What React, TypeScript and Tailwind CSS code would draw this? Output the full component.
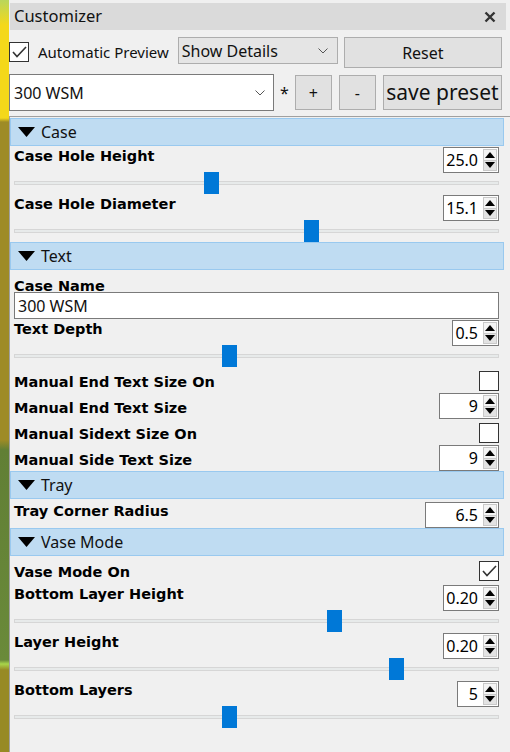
import React from 'react';

const sans = 'font-["Noto_Sans","Open_Sans",sans-serif]';
const bold = 'font-["DejaVu_Sans","Verdana",sans-serif] font-bold';

function Chevron() {
  return (
    <svg width="10" height="6" viewBox="0 0 10 6" className="shrink-0">
      <polyline points="0.5,0.5 5,5 9.5,0.5" fill="none" stroke="#555" strokeWidth="1" />
    </svg>
  );
}

function CheckMark() {
  return (
    <svg width="15" height="12" viewBox="0 0 15 12">
      <polyline points="1,6 5,10.5 14,1" fill="none" stroke="#333" strokeWidth="1.6" />
    </svg>
  );
}

function Check({ checked }: { checked?: boolean }) {
  return (
    <div className="w-[20px] h-[20px] bg-white border border-[#333] flex items-center justify-center">
      {checked && <CheckMark />}
    </div>
  );
}

function Spin({ value, width }: { value: string; width: number }) {
  return (
    <div className="h-[26px] bg-white border border-[#7a7a7a] flex items-stretch" style={{ width }}>
      <div className={`flex-1 flex items-center justify-end pr-[5px] text-[16px] text-black ${sans}`}>{value}</div>
      <div className="w-[15px] flex flex-col py-px pr-px">
        <div className="flex-1 flex items-center justify-center bg-[#f4f4f4] border border-[#c9c9c9]">
          <svg width="10" height="6" viewBox="0 0 10 6"><polygon points="0,6 5,0 10,6" fill="#000" /></svg>
        </div>
        <div className="flex-1 flex items-center justify-center bg-[#e3e3e3] border border-[#c9c9c9] border-t-0">
          <svg width="10" height="6" viewBox="0 0 10 6"><polygon points="0,0 5,6 10,0" fill="#000" /></svg>
        </div>
      </div>
    </div>
  );
}

function Slider({ pos }: { pos: number }) {
  return (
    <div className="h-[22px] relative flex items-center">
      <div className="w-full h-[4px] bg-[#e7eaea] border border-[#d6d6d6]" />
      <div className="absolute top-0 w-[15px] h-[22px] bg-[#0078d7]" style={{ left: pos }} />
    </div>
  );
}

function Header({ title }: { title: string }) {
  return (
    <div className="h-[28px] bg-[#bfdcf2] border border-[#99c9ef] flex items-center gap-[6px] pl-[7px]">
      <svg width="17" height="10" viewBox="0 0 17 10"><polygon points="0,0 17,0 8.5,10" fill="#000" /></svg>
      <span className={`text-[16px] text-[#111] ${sans}`}>{title}</span>
    </div>
  );
}

function Label({ children }: { children: React.ReactNode }) {
  return <span className={`text-[14.5px] leading-[18px] text-black ${bold}`}>{children}</span>;
}

function SliderParam({ label, value, width, pos }: { label: string; value: string; width: number; pos: number }) {
  return (
    <div className="h-[48px] flex flex-col">
      <div className="h-[26px] flex justify-between items-start pt-px">
        <Label>{label}</Label>
        <Spin value={value} width={width} />
      </div>
      <Slider pos={pos} />
    </div>
  );
}

function SpinParam({ label, value, width }: { label: string; value: string; width: number }) {
  return (
    <div className="h-[26px] flex justify-between items-start">
      <div className="pt-[2px]"><Label>{label}</Label></div>
      <Spin value={value} width={width} />
    </div>
  );
}

function CheckParam({ label, checked }: { label: string; checked?: boolean }) {
  return (
    <div className="h-[26px] flex justify-between items-start">
      <div className="pt-[2px]"><Label>{label}</Label></div>
      <div className="pt-[4px]"><Check checked={checked} /></div>
    </div>
  );
}

export default function App() {
  return (
    <div className="w-[510px] h-[752px] flex overflow-hidden bg-[#f0f0f0]">
      <div className="w-[9px] shrink-0 bg-[linear-gradient(to_bottom,#b9d65c_0px,#f4d81a_25px,#f4d81a_118px,#9e8b26_122px,#9e8b26_440px,#617f35_450px,#6a8a3a_660px,#a8d54a_664px,#978a25_670px,#978a25_752px)]" />
      <div className="flex-1 flex flex-col">
        {/* title */}
        <div className="mt-[3px] mr-[4px] ml-px h-[27px] bg-[#dadada] flex items-center justify-between pl-[4px] pr-[10px]">
          <span className={`text-[16.5px] text-[#111] ${sans}`}>Customizer</span>
          <svg width="12" height="12" viewBox="0 0 12 12">
            <path d="M1.5 1.5 L10.5 10.5 M10.5 1.5 L1.5 10.5" stroke="#333" strokeWidth="2.4" />
          </svg>
        </div>

        {/* preview row */}
        <div className="mt-[7px] h-[32px] flex items-start mr-[8px]">
          <div className="mt-[5px]"><Check checked /></div>
          <span className={`ml-[9px] mt-[4px] text-[15px] text-[#111] ${sans}`}>Automatic Preview</span>
          <div className={`ml-[9px] w-[160px] h-[27px] bg-[#e5e5e5] border border-[#adadad] flex items-center justify-between pl-[3px] pr-[9px] text-[16px] text-[#111] ${sans}`}>
            <span>Show Details</span>
            <Chevron />
          </div>
          <div className={`ml-[6px] flex-1 h-[31px] bg-[#e1e1e1] border border-[#adadad] flex items-center justify-center text-[16px] text-[#111] ${sans}`}>
            Reset
          </div>
        </div>

        {/* preset row */}
        <div className="mt-[5px] h-[37px] flex items-start mr-[8px]">
          <div className={`w-[265px] h-[37px] bg-white border border-[#7a7a7a] flex items-center justify-between pl-[4px] pr-[8px] text-[16px] text-[#111] ${sans}`}>
            <span>300 WSM</span>
            <Chevron />
          </div>
          <span className={`ml-[6px] mt-[7px] text-[16px] text-[#111] ${sans}`}>*</span>
          <div className={`ml-[6px] mt-px w-[37px] h-[35px] bg-[#e1e1e1] border border-[#adadad] flex items-center justify-center text-[16px] text-[#111] ${sans}`}>+</div>
          <div className={`ml-[7px] mt-px w-[37px] h-[35px] bg-[#e1e1e1] border border-[#adadad] flex items-center justify-center text-[16px] text-[#111] ${sans}`}>-</div>
          <div className={`ml-[7px] mt-px flex-1 h-[35px] bg-[#e1e1e1] border border-[#adadad] flex items-center justify-center text-[21px] text-[#111] ${sans}`}>save preset</div>
        </div>

        {/* parameters */}
        <div className="mt-[5px] flex-1 border-l border-t border-[#a0a0a0] pt-px pr-[6px]">
          <Header title="Case" />
          <div className="pl-[4px] pr-[5px]">
            <SliderParam label="Case Hole Height" value="25.0" width={56} pos={190} />
            <SliderParam label="Case Hole Diameter" value="15.1" width={56} pos={290} />
          </div>

          <Header title="Text" />
          <div className="pl-[4px] pr-[5px]">
            <div className="h-[22px] pt-[3px]"><Label>Case Name</Label></div>
            <div className={`h-[27px] bg-white border border-[#7a7a7a] flex items-center pl-[3px] text-[16px] text-[#111] ${sans}`}>300 WSM</div>
            <SliderParam label="Text Depth" value="0.5" width={47} pos={208} />
            <CheckParam label="Manual End Text Size On" />
            <SpinParam label="Manual End Text Size" value="9" width={60} />
            <CheckParam label="Manual Sidext Size On" />
            <SpinParam label="Manual Side Text Size" value="9" width={60} />
          </div>

          <Header title="Tray" />
          <div className="pl-[4px] pr-[5px]">
            <div className="h-[29px] flex justify-between items-start pt-[3px]">
              <Label>Tray Corner Radius</Label>
              <Spin value="6.5" width={74} />
            </div>
          </div>

          <Header title="Vase Mode" />
          <div className="pl-[4px] pr-[5px]">
            <div className="h-[28px] flex justify-between items-start">
              <div className="pt-[3px]"><Label>Vase Mode On</Label></div>
              <div className="pt-[5px]"><Check checked /></div>
            </div>
            <SliderParam label="Bottom Layer Height" value="0.20" width={56} pos={313} />
            <SliderParam label="Layer Height" value="0.20" width={56} pos={375} />
            <SliderParam label="Bottom Layers" value="5" width={42} pos={208} />
          </div>
        </div>
      </div>
    </div>
  );
}
